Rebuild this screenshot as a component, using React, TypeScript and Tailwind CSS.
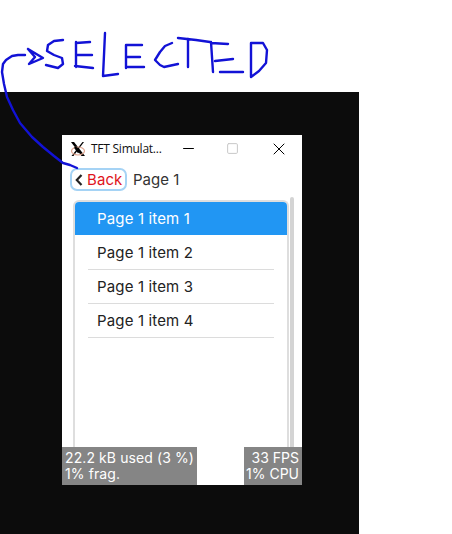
import { Minus, Square, X } from 'lucide-react';

const items = ['Page 1 item 1', 'Page 1 item 2', 'Page 1 item 3', 'Page 1 item 4'];

function AppIcon() {
    return (
        <svg width="16" height="16" viewBox="0 0 16 16" className="shrink-0">
            <path d="M1 1 L4 1 L15 15 L11.5 15 Z" fill="#000" />
            <path d="M12.5 1 L14 1 L3.5 15 L1.5 15 Z" fill="#000" />
            <ellipse cx="8" cy="10" rx="6.5" ry="4" fill="none" stroke="#e0a58f" strokeWidth="1.2" />
            <path d="M5 6 L9 11.5" stroke="#000" strokeWidth="2.5" />
        </svg>
    );
}

function Annotation() {
    const strokes = [
        'M25 55 L18 55 L12 56 L6 60 L3 64 L2 72 L4 84 L7 97 L13 110 L20 123 L32 137 L43 147 L54 156 L63 163 L70 165 L77 168',
        'M28 49 L43 58 L29 64 L35 57 L28 49',
        'M63 40 L54 41 L48 45 L47 51 L54 55 L62 58 L63 64 L58 68 L46 65',
        'M76 42 L76 67 M76 43 L90 42 M76 55 L92 55 M75 66 L93 68',
        'M105 33 L104 55 L103 76 L118 74',
        'M126 45 L126 68 M126 45 L142 45 M126 57 L140 57 M126 67 L144 67',
        'M172 43 L165 46 L160 52 L155 60 L160 65 L164 67 L178 64',
        'M178 38 L196 40 L210 42 M188 39 L188 67',
        'M211 42 L213 72 M211 43 L228 44 M215 61 L233 59 M220 72 L243 72',
        'M251 43 L251 77 L259 71 L266 63 L267 50 L263 43 L251 43',
    ];
    return (
        <svg width="452" height="534" viewBox="0 0 452 534" className="absolute left-0 top-0 pointer-events-none">
            {strokes.map((d) => (
                <path key={d} d={d} fill="none" stroke="#1212d6" strokeWidth="2.4" strokeLinejoin="round" strokeLinecap="round" />
            ))}
        </svg>
    );
}

export default function App() {
    return (
        <div className="relative w-[452px] h-[534px] overflow-hidden bg-white font-['Inter',sans-serif]">
            <div className="w-[359px] h-[442px] mt-[92px] bg-[#0c0c0c] pt-[43px] pl-[62px]">
                <div className="relative w-[240px] h-[350px] bg-white overflow-hidden">
                    <div className="flex items-center h-[27px] pl-[8px]">
                        <AppIcon />
                        <span className="ml-[5px] w-[82px] text-[12px] text-[#111] whitespace-nowrap font-['Open_Sans',sans-serif] tracking-[-0.25px]">TFT Simulat...</span>
                        <Minus size={17} absoluteStrokeWidth strokeWidth={1} className="ml-[7px] text-black" />
                        <Square size={13} absoluteStrokeWidth strokeWidth={1} className="ml-[29px] text-[#c8c8c8]" />
                        <X size={20} absoluteStrokeWidth strokeWidth={1} className="ml-[30px] text-black" />
                    </div>
                    <div className="flex items-center h-[23px] mt-[6px] ml-[8px]">
                        <div className="flex items-center w-[57px] h-[23px] rounded-[7px] border-2 border-[#a5d3f5] pl-[3px]">
                            <svg width="8" height="12" viewBox="0 0 8 12" className="shrink-0">
                                <path d="M6.5 1 L1.8 6 L6.5 11" fill="none" stroke="#222" strokeWidth="2.2" />
                            </svg>
                            <span className="ml-[4px] pt-[1px] text-[15px] tracking-[0.1px] text-[#e0141c]">Back</span>
                        </div>
                        <span className="ml-[6px] pt-[1px] text-[15px] text-[#333]">Page 1</span>
                    </div>
                    <div className="flex mt-[9px] ml-[11px] h-[301px]">
                        <div className="w-[216px] h-[320px] rounded-t-[6px] border-x-2 border-t-2 border-[#dedede]">
                            {items.map((item, i) => (
                                <div key={item} className={i === 0 ? 'flex items-center h-[33px] pl-[22px] pt-[1px] rounded-t-[4px] bg-[#2196f3] text-white text-[15px] tracking-[0.15px]' : i === 1 ? 'flex items-center h-[34px] mt-[1px] mx-[13px] pl-[9px] pt-[1px] border-b border-[#dcdcdc] text-[#222] text-[15px] tracking-[0.15px]' : 'flex items-center h-[34px] mx-[13px] pl-[9px] pt-[1px] border-b border-[#dcdcdc] text-[#222] text-[15px] tracking-[0.15px]'}>
                                    {item}
                                </div>
                            ))}
                        </div>
                        <div className="w-[4px] h-[288px] -mt-[3px] ml-[1px] bg-[#d4d4d4] rounded-[2px]" />
                    </div>
                    <div className="absolute left-0 bottom-0 w-[135px] h-[38px] bg-[#858585] pl-[3px] pt-[3px] text-white text-[14px] tracking-[0.1px] leading-[16px] whitespace-nowrap">
                        <div>22.2 kB used (3 %)</div>
                        <div>1% frag.</div>
                    </div>
                    <div className="absolute right-0 bottom-0 w-[58px] h-[38px] bg-[#858585] pr-[3px] pt-[3px] text-white text-[14px] leading-[16px] text-right whitespace-nowrap">
                        <div>33 FPS</div>
                        <div>1% CPU</div>
                    </div>
                </div>
            </div>
            <Annotation />
        </div>
    );
}
